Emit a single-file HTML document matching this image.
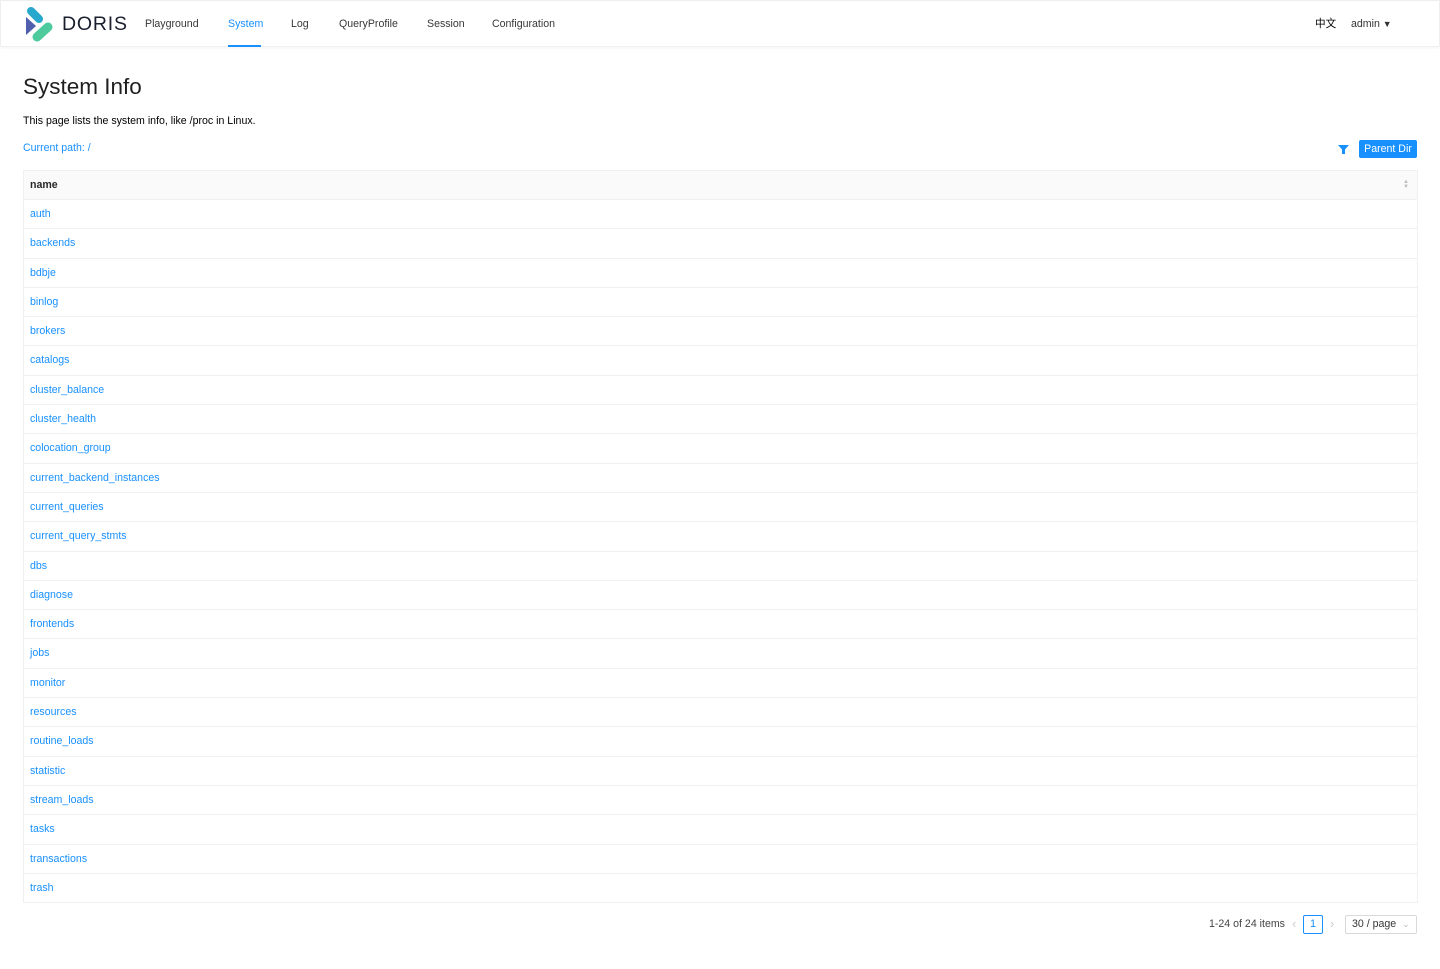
<!DOCTYPE html>
<html><head><meta charset="utf-8">
<style>
*{box-sizing:border-box;margin:0;padding:0}
body{width:1440px;height:969px;background:#fff;font-family:"Liberation Sans","Noto Sans CJK SC",sans-serif;color:rgba(0,0,0,.85);font-size:11px;overflow:hidden;position:relative}
.hdr{position:absolute;left:0;top:0;width:1440px;height:47px;border:1px solid #eee;border-bottom:1px solid #f0f0f0;box-shadow:0 1px 3px rgba(0,0,0,.05)}
.logo{position:absolute;left:24px;top:6px}
.brand{position:absolute;left:61px;top:12px;font-size:19.5px;letter-spacing:0.8px;color:#1a1f2e;font-weight:500}
.nav a{position:absolute;top:17px;font-size:10.6px;color:rgba(0,0,0,.8);text-decoration:none}
.nav a.act{color:#1890ff}
.ul{position:absolute;left:227px;top:44px;width:33px;height:2px;background:#1890ff}
h1{position:absolute;left:23px;top:74px;font-size:22.5px;font-weight:500;color:rgba(0,0,0,.88)}
.desc{position:absolute;left:23px;top:115px;font-size:10.6px;color:#000}
.path{position:absolute;left:23px;top:142px;font-size:10.6px;color:#1890ff}
.btn{position:absolute;left:1359px;top:140px;width:58px;height:18px;background:#1890ff;color:#fff;border-radius:2px;font-size:10.6px;text-align:center;line-height:18px}
.tbl{position:absolute;left:23px;top:170px;width:1395px;border:1px solid #f0f0f0;border-bottom:none}
.th{height:29px;background:#fafafa;border-bottom:1px solid #f0f0f0;padding-left:6px;line-height:29px;font-weight:bold;font-size:10.6px;color:rgba(0,0,0,.85);position:relative}
.tr{height:29.3px;border-bottom:1px solid #f0f0f0;padding-left:6px;line-height:29px;color:#1890ff;font-size:10.6px}
.pg{position:absolute;top:915px;font-size:10.6px;color:rgba(0,0,0,.75)}
</style></head><body>
<div class="hdr">
<svg class="logo" width="28" height="36" viewBox="0 0 28 36">
<path d="M1 10 L11 19 L1 28 Z" fill="#4f5fae"/>
<line x1="6" y1="4" x2="14" y2="12" stroke="#27a8cc" stroke-width="8" stroke-linecap="round"/>
<line x1="12" y1="30" x2="23" y2="20" stroke="#4ecb9d" stroke-width="9" stroke-linecap="round"/>
</svg>
<div class="brand">DORIS</div>
<div class="nav">
<a style="left:144px">Playground</a>
<a class="act" style="left:227px">System</a>
<a style="left:290px">Log</a>
<a style="left:338px">QueryProfile</a>
<a style="left:426px">Session</a>
<a style="left:491px">Configuration</a>
<a style="left:1314px;top:15px;color:#000">中文</a>
<a style="left:1350px;color:#333">admin <span style="font-size:9px">&#9660;</span></a>
</div>
<div class="ul"></div>
</div>
<h1>System Info</h1>
<div class="desc">This page lists the system info, like /proc in Linux.</div>
<div class="path">Current path: /</div>
<svg style="position:absolute;left:1338px;top:144px" width="11" height="11" viewBox="0 0 11 11"><path d="M0 1h11L7 5.5V10H4V5.5Z" fill="#1890ff"/></svg>
<div class="btn">Parent Dir</div>
<div class="tbl">
<div class="th">name<span style="position:absolute;right:8px;top:0;font-size:6px;color:#bbb;line-height:5px;padding-top:9px">▲<br>▼</span></div>
<div class="tr">auth</div><div class="tr">backends</div><div class="tr">bdbje</div><div class="tr">binlog</div><div class="tr">brokers</div><div class="tr">catalogs</div><div class="tr">cluster_balance</div><div class="tr">cluster_health</div><div class="tr">colocation_group</div><div class="tr">current_backend_instances</div><div class="tr">current_queries</div><div class="tr">current_query_stmts</div><div class="tr">dbs</div><div class="tr">diagnose</div><div class="tr">frontends</div><div class="tr">jobs</div><div class="tr">monitor</div><div class="tr">resources</div><div class="tr">routine_loads</div><div class="tr">statistic</div><div class="tr">stream_loads</div><div class="tr">tasks</div><div class="tr">transactions</div><div class="tr">trash</div>
</div>
<div class="pg" style="left:1209px;top:918px">1-24 of 24 items</div>
<div class="pg" style="left:1292px;top:916px;color:#ccc;font-size:13px">&lsaquo;</div>
<div style="position:absolute;left:1303px;top:915px;width:20px;height:19px;border:1px solid #1890ff;border-radius:2px;color:#1890ff;text-align:center;line-height:17px;font-size:11px">1</div>
<div class="pg" style="left:1330px;top:916px;color:#ccc;font-size:13px">&rsaquo;</div>
<div style="position:absolute;left:1345px;top:915px;width:72px;height:19px;border:1px solid #d9d9d9;border-radius:2px;font-size:10.6px;line-height:17px;padding-left:6px;color:rgba(0,0,0,.8)">30 / page <span style="color:#bbb;font-size:9px;margin-left:3px">&#8964;</span></div>
</body></html>
